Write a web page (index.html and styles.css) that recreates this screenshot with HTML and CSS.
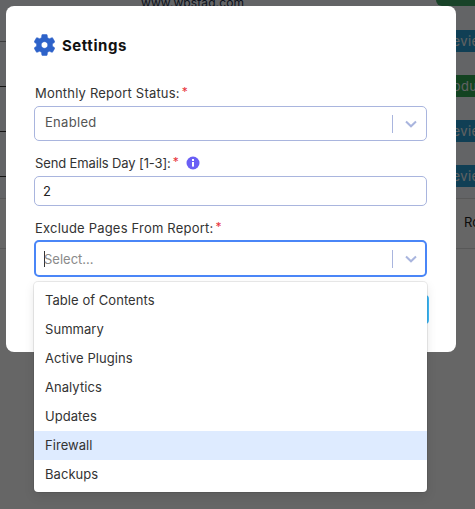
FILE: index.html
```html
<!DOCTYPE html>
<html lang="en">
<head>
<meta charset="utf-8">
<title>Settings</title>
<link rel="stylesheet" href="styles.css">
</head>
<body>
<div class="page">
  <div class="top-row">
    <span class="url">www.wpstag.com</span>
    <span class="top-badge"></span>
  </div>
  <div class="row"><span class="tick tick-dim"></span><span class="badge badge-blue">Review</span></div>
  <div class="row"><span class="tick"></span><span class="badge badge-green">Product</span></div>
  <div class="row"><span class="tick"></span><span class="badge badge-blue">Review</span></div>
  <div class="row row-last"><span class="tick"></span><span class="badge badge-blue">Review</span></div>
  <div class="head-row"><span class="head-text">Role</span></div>
</div>
<div class="overlay"></div>
<div class="modal">
  <div class="title-row">
    <svg class="gear" viewBox="2.5 2 19 20"><path d="M19.14 12.94c.04-.3.06-.61.06-.94 0-.32-.02-.64-.07-.94l2.03-1.58a.49.49 0 0 0 .12-.61l-1.92-3.32a.488.488 0 0 0-.59-.22l-2.39.96c-.5-.38-1.03-.7-1.62-.94l-.36-2.54a.484.484 0 0 0-.48-.41h-3.84c-.24 0-.43.17-.47.41l-.36 2.54c-.59.24-1.13.57-1.62.94l-2.39-.96c-.22-.08-.47 0-.59.22L2.74 8.87c-.12.21-.08.47.12.61l2.03 1.58c-.05.3-.09.63-.09.94s.02.64.07.94l-2.03 1.58a.49.49 0 0 0-.12.61l1.92 3.32c.12.22.37.29.59.22l2.39-.96c.5.38 1.03.7 1.62.94l.36 2.54c.05.24.24.41.48.41h3.84c.24 0 .44-.17.47-.41l.36-2.54c.59-.24 1.13-.56 1.62-.94l2.39.96c.22.08.47 0 .59-.22l1.92-3.32c.12-.22.07-.47-.12-.61l-2.01-1.58zM12 15c-1.65 0-3-1.35-3-3s1.35-3 3-3 3 1.35 3 3-1.35 3-3 3z"/></svg>
    <h2 class="title">Settings</h2>
  </div>

  <div class="label label-first">Monthly Report Status:<span class="req">*</span></div>
  <div class="control select">
    <span class="value">Enabled</span>
    <span class="sep"></span>
    <svg class="chev" viewBox="0 0 12 8"><path d="M1 1.5 6 6.3l5-4.8"/></svg>
  </div>

  <div class="label label-second">Send Emails Day [1-3]:<span class="req">*</span>
    <svg class="info" viewBox="0 0 14 14"><circle cx="7" cy="7" r="6.5"/><rect class="info-i" x="6" y="3" width="2" height="2"/><rect class="info-i" x="6" y="6" width="2" height="4.6"/></svg>
  </div>
  <div class="control input">2</div>

  <div class="label label-third">Exclude Pages From Report:<span class="req">*</span></div>
  <div class="control select focused">
    <span class="caret"></span><span class="placeholder">Select...</span>
    <span class="sep"></span>
    <svg class="chev" viewBox="0 0 12 8"><path d="M1 1.5 6 6.3l5-4.8"/></svg>
    <ul class="menu">
      <li>Table of Contents</li>
      <li>Summary</li>
      <li>Active Plugins</li>
      <li>Analytics</li>
      <li>Updates</li>
      <li class="hover">Firewall</li>
      <li>Backups</li>
    </ul>
  </div>

  <div class="footer"><span class="save"></span></div>
</div>
</body>
</html>
```
FILE: styles.css
```css
* { box-sizing: border-box; }
html, body { margin: 0; height: 100%; overflow: hidden; }
body {
  width: 475px;
  height: 509px;
  position: relative;
  font-family: Inter, "Noto Sans", sans-serif;
  font-size: 13px;
  color: #3a3a3a;
  background: #fff;
}

/* dimmed page behind the dialog */
.page { height: 100%; background: #fff; overflow: hidden; }
.top-row { height: 18px; display: flex; background: #f7f9ff; }
.url {
  margin: -5px 0 0 141px;
  font-size: 12px;
  line-height: 16px;
  color: #25304a;
  letter-spacing: .1px;
}
.top-badge {
  margin-left: auto;
  width: 39px;
  height: 6px;
  background: #3fa768;
  border-radius: 0 0 0 6px;
}
.row {
  height: 45px;
  display: flex;
  align-items: center;
  background: #f7f9ff;
}
.row-last { border-bottom: 1px solid #ddd; height: 46px; }
.tick { width: 6px; height: 1px; background: #333; margin-top: 2px; }
.tick-dim { opacity: .5; }
.badge {
  margin-left: auto;
  margin-right: -30px;
  width: 70px;
  height: 22px;
  line-height: 22px;
  color: #f0f4f6;
  flex-shrink: 0;
  padding-left: 9px;
  letter-spacing: .4px;
}
.badge-blue { background: #2a9ed4; }
.badge-green { background: #30a853; padding-left: 4px; }
.head-row {
  height: 50px;
  padding-bottom: 3px;
  display: flex;
  align-items: center;
  justify-content: flex-end;
  border-bottom: 1px solid #ddd;
  background: #fff;
}
.head-text { color: #222; margin-right: -16px; width: 27px; flex-shrink: 0; }

.overlay { position: absolute; inset: 0; background: rgba(0, 0, 0, .6); }

/* dialog */
.modal {
  position: absolute;
  left: 6px;
  top: 6px;
  width: 450px;
  height: 346px;
  padding: 27px 29px 27px 28px;
  background: #fff;
  border-radius: 8px;
}
.title-row { display: flex; align-items: center; gap: 7px; height: 24px; }
.gear { width: 21px; height: 22px; fill: #2d62c9; stroke: #2d62c9; stroke-width: .5; }
.title { margin: 0; font-size: 15px; font-weight: 700; color: #111; letter-spacing: .55px; }

.label {
  display: flex;
  align-items: flex-start;
  height: 16px;
  line-height: 16px;
  margin: 14px 0 5px 1px;
  color: #333;
  white-space: nowrap;
  letter-spacing: .2px;
}
.label-first { margin-top: 28px; }
.label-second { letter-spacing: -.12px; }
.label-third { margin-bottom: 4px; }
.req { color: #e8323c; margin-left: 2px; font-size: 12px; line-height: 14px; }
.info { width: 14px; height: 14px; margin: 1px 0 0 7px; fill: #6a5ff5; }
.info-i { fill: #fff; }

.control {
  display: flex;
  align-items: center;
  border: 1px solid #a9b5de;
  border-radius: 5px;
  background: #fff;
  position: relative;
}
.select { height: 35px; padding-left: 10px; color: #555; }
.input { height: 30px; padding-left: 8px; color: #222; }
.value { flex: 1; padding-bottom: 3px; letter-spacing: .3px; }
.placeholder { flex: 1; color: #8a8a8a; }
.sep { width: 1px; height: 18px; background: #a9b5de; }
.chev {
  width: 12px;
  height: 8px;
  margin: 1px 9px 0 12px;
  fill: none;
  stroke: #a9b5de;
  stroke-width: 2;
}
.focused { height: 37px; border: 2px solid #4a86f7; padding-left: 8px; }
.focused .chev { margin-right: 8px; }
.caret { width: 1px; height: 16px; background: #333; margin-right: -1px; }

.menu {
  position: absolute;
  left: -2px;
  right: -2px;
  top: 40px;
  margin: 0;
  padding: 4px 0 3px;
  list-style: none;
  background: #fff;
  border-radius: 4px;
  box-shadow: 0 0 0 1px rgba(0, 0, 0, .08), 0 4px 11px rgba(0, 0, 0, .1);
  z-index: 2;
  color: #333;
  letter-spacing: .05px;
}
.menu li { height: 29px; line-height: 28px; padding-left: 11px; }
.menu .hover { background: #deebff; }

.footer { display: flex; justify-content: flex-end; margin: 18px -2px 0 0; }
.save { width: 90px; height: 29px; background: #3db9f8; border-radius: 4px; }
```
